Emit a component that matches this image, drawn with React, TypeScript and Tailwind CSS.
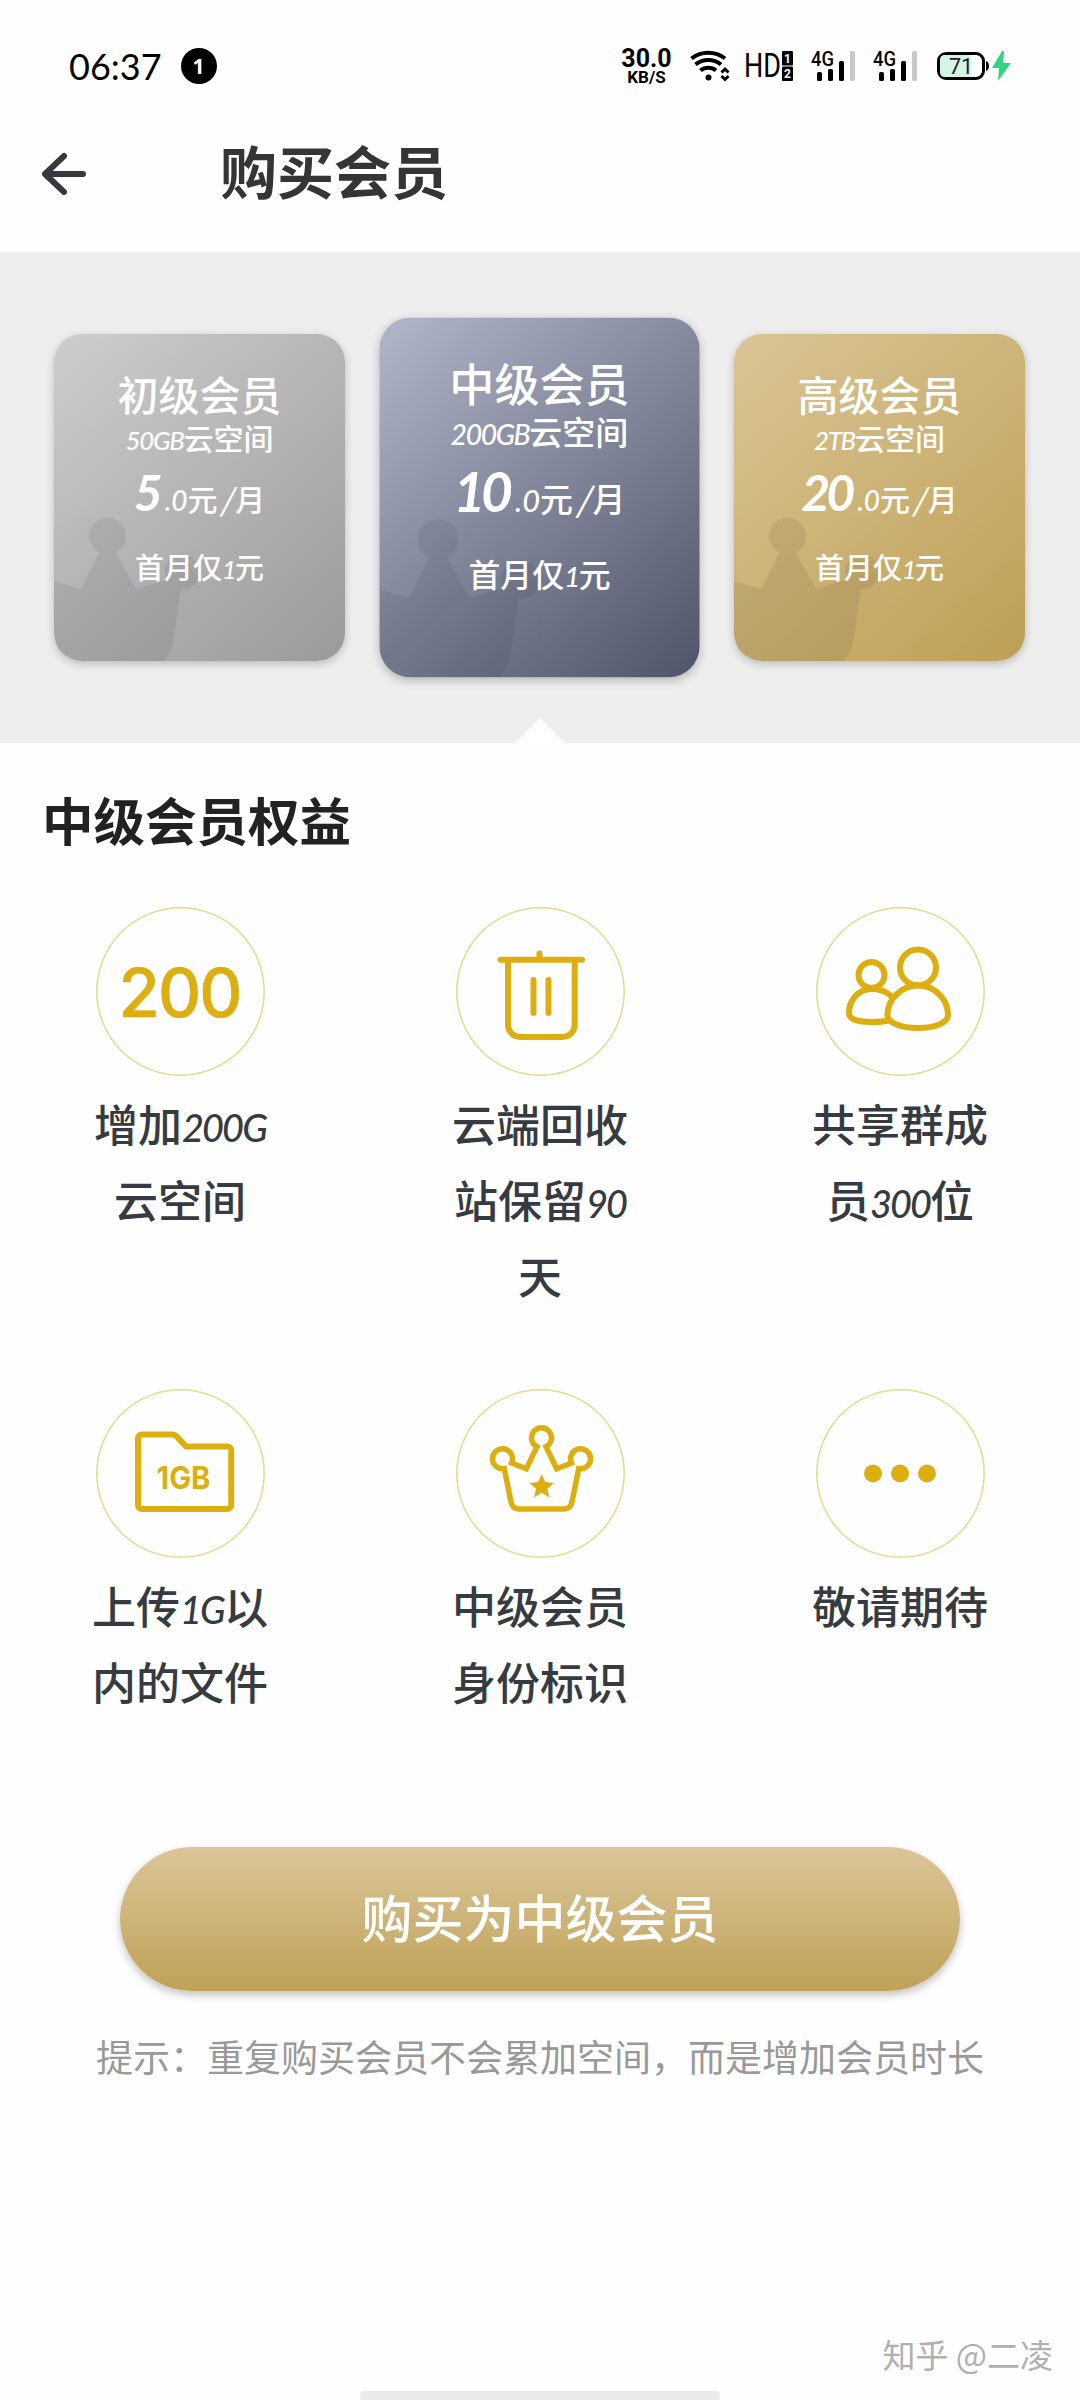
import type { ReactNode } from "react";

type Plan = {
  id: string;
  name: string;
  quota: string;
  price: string;
  gradient: string;
  active?: boolean;
};

const PLANS: Plan[] = [
  {
    id: "basic",
    name: "初级会员",
    quota: "50GB",
    price: "5",
    gradient: "from-[#cdcdcd] to-[#9a9a9a]",
  },
  {
    id: "middle",
    name: "中级会员",
    quota: "200GB",
    price: "10",
    gradient: "from-[#b1b6ca] to-[#4f5469]",
    active: true,
  },
  {
    id: "senior",
    name: "高级会员",
    quota: "2TB",
    price: "20",
    gradient: "from-[#dac597] to-[#bd9f54]",
  },
];

const GOLD = "#dcae10";

// Latin letters and digits run narrower than the Chinese glyphs next to them
function Latin({ children }: { children: ReactNode }) {
  return (
    <span className="font-[Lato,'Noto_Sans_CJK_SC',sans-serif] text-[0.86em] italic leading-none tracking-[-0.05em]">
      {children}
    </span>
  );
}

function Signal() {
  return (
    <svg className="overflow-visible" width="45" height="32" viewBox="0 0 45 32">
      <text
        x="0"
        y="16"
        fontSize="21"
        fontWeight="500"
        fontFamily="Roboto, sans-serif"
        textLength="23"
        lengthAdjust="spacingAndGlyphs"
      >
        4G
      </text>
      <rect x="6" y="22" width="5" height="9" rx="1.5" />
      <rect x="17" y="19" width="5" height="12" rx="1.5" />
      <rect x="28" y="11" width="5" height="20" rx="1.5" />
      <rect x="39" y="1" width="5" height="30" rx="1.5" fill="#c8c8c8" />
    </svg>
  );
}

function StatusBar() {
  return (
    <header className="flex h-[132px] items-center pl-[69px] pr-[66px] text-black">
      <span className="font-[Lato,sans-serif] text-[36px] leading-none">06:37</span>
      <span className="ml-[19px] flex size-9 items-center justify-center rounded-full bg-black font-['Noto_Sans',sans-serif] text-[21px] font-bold leading-none text-white">
        1
      </span>
      <div className="ml-auto flex w-[49px] flex-col items-center font-[Roboto,sans-serif] leading-none">
        <span className="text-[25px] font-bold leading-[21px]">30.0</span>
        <span className="text-[17px] font-bold leading-[16px]">KB/S</span>
      </div>
      <svg className="ml-[19px]" width="40" height="32" viewBox="0 0 40 32" fill="none" stroke="#000" strokeWidth="4">
        <path d="M1.5 8.5a27 27 0 0 1 33.500 0" />
        <path d="M5.500 14.500a20 20 0 0 1 25.500 0" />
        <path d="M10.500 20.500a12 12 0 0 1 15.500 0" />
        <circle cx="18.500" cy="27.500" r="3" fill="#000" stroke="none" />
        <path d="M31.500 22.500l3.500-3.500 3.500 3.500M31.500 26l3.500 3.500 3.500-3.500" strokeWidth="3" />
      </svg>
      <svg className="ml-[14px] overflow-visible" width="50" height="32" viewBox="0 0 50 32">
        <text x="0" y="27" fontSize="33" fontFamily="Roboto, sans-serif" textLength="37" lengthAdjust="spacingAndGlyphs">
          HD
        </text>
        <rect x="38" y="1" width="11" height="14.500" rx="1" />
        <rect x="38" y="16.500" width="11" height="14.500" rx="1" />
        <g fill="#fff" fontSize="12" fontWeight="700" fontFamily="Roboto, sans-serif" textAnchor="middle">
          <text x="43.500" y="12.500">1</text>
          <text x="43.500" y="28">2</text>
        </g>
      </svg>
      <div className="ml-[17px] flex gap-[17px]">
        <Signal />
        <Signal />
      </div>
      <svg className="ml-[18px]" width="78" height="32" viewBox="0 0 78 32">
        <path d="M50 11q3 1 3 5t-3 5z" />
        <rect x="2.500" y="3.500" width="45" height="25" rx="7.500" fill="#fff" stroke="#000" strokeWidth="3" />
        <path d="M9 5h26v22H9q-5 0-5-5V10q0-5 5-5z" fill="#d3f5e6" />
        <text x="25" y="23.500" fontSize="21.500" fontFamily="Roboto, sans-serif" fontWeight="400" textAnchor="middle" fill="#222">
          71
        </text>
        <path d="M66 1L56 18h7l-1 13 13-18h-8l1-12z" fill="#2fd680" />
      </svg>
    </header>
  );
}

function TitleBar() {
  return (
    <div className="flex h-[120px] items-start pl-[41px] pt-[12px]">
      <svg className="mt-[8px]" width="46" height="44" viewBox="0 0 46 44" fill="none" stroke="#37393f" strokeWidth="6" strokeLinecap="round" strokeLinejoin="round">
        <path d="M42 22H4M23 4L4 22l19 18" />
      </svg>
      <h1 className="-mt-[5px] ml-[133px] text-[57px] font-bold leading-[60px] text-[#353535]">
        购买会员
      </h1>
    </div>
  );
}

function CrownWatermark() {
  return (
    <svg
      className="absolute left-0 top-0 opacity-[0.07]"
      width="291"
      height="327"
      viewBox="0 0 291 327"
      fill="#000"
    >
      <circle cx="53.500" cy="202" r="18.500" />
      <circle cx="128" cy="238" r="17.500" />
      <path d="M0 247l27 8 19-38h15l21 38 34-11 11 10-8 54q-1 10-10 19H0z" />
    </svg>
  );
}

function PlanCard({ plan }: { plan: Plan }) {
  return (
    <button
      type="button"
      className={`relative flex h-[327px] w-[291px] flex-col items-center overflow-hidden rounded-[28px] bg-linear-[138deg] pt-[35px] text-white shadow-[0_3px_9px_rgba(0,0,0,0.22)] ${plan.gradient} ${
        plan.active ? "scale-110" : ""
      }`}
    >
      <CrownWatermark />
      <span className="relative text-[41px] font-medium leading-[48px]">{plan.name}</span>
      <span className="relative mt-px text-[30px] font-medium leading-[38px]">
        <Latin>{plan.quota}</Latin>云空间
      </span>
      <span className="relative mt-[11px] flex h-[50px] items-baseline text-[30px] font-medium leading-[50px]">
        <span className="font-[Lato,sans-serif] text-[50px] font-bold italic tracking-[-0.08em]">
          {plan.price}
        </span>
        <span className="ml-[6px] font-[Lato,sans-serif] text-[28px] italic">.0</span>
        <span>元</span>
        <span className="mx-[3px] italic">/</span>
        <span>月</span>
      </span>
      <span className="relative mt-[30px] text-[29px] font-medium leading-[38px]">
        首月仅<Latin>1</Latin>元
      </span>
    </button>
  );
}

function PlanPicker() {
  return (
    <section className="relative flex h-[491px] justify-center gap-[49px] bg-[#eeeeee] pr-px pt-[82px]">
      {PLANS.map((p) => (
        <PlanCard key={p.id} plan={p} />
      ))}
      <svg className="absolute bottom-0 left-[515px]" width="50" height="25" viewBox="0 0 50 25" fill="#fff">
        <path d="M25 0l25 25H0z" />
      </svg>
    </section>
  );
}

function IconCircle({ children }: { children: ReactNode }) {
  return (
    <svg
      width="169"
      height="169"
      viewBox="0 0 169 169"
      fill="none"
      stroke={GOLD}
      strokeWidth="6"
      strokeLinecap="round"
      strokeLinejoin="round"
    >
      <circle cx="84.500" cy="84.500" r="83.700" stroke="#e4d98c" strokeWidth="1.500" />
      {children}
    </svg>
  );
}

type Benefit = { id: string; icon: ReactNode; lines: ReactNode[] };

const BENEFITS: Benefit[] = [
  {
    id: "space",
    icon: (
      <text x="84.500" y="110" fontSize="67" fontWeight="500" fontFamily="Inter, sans-serif" textAnchor="middle" textLength="124" fill={GOLD} stroke={GOLD} strokeWidth="0.500">
        200
      </text>
    ),
    lines: [<>增加<Latin>200G</Latin></>, "云空间"],
  },
  {
    id: "trash",
    icon: (
      <>
        <path d="M44.500 52.700h81.500M83.500 46.500v6M77.500 73v33M92.500 73v33" />
        <path d="M52 53v65a12 12 0 0 0 12 12h42.700a12 12 0 0 0 12-12V53" />
      </>
    ),
    lines: ["云端回收", <>站保留<Latin>90</Latin></>, "天"],
  },
  {
    id: "group",
    icon: (
      <>
        <circle cx="55.500" cy="68" r="13" />
        <circle cx="102" cy="60.500" r="18" />
        <path d="M74.500 88.500C69.500 84 62.500 82 55.500 82c-13 0-22.500 11-22.500 24 0 7 11.500 9 22.500 9 7 0 12-.4 17-1.500" />
        <path d="M102 78.500C84.500 78.500 71.500 93 71.500 108c0 8 14 13 30.500 13s30-5 30-13c0-15-12.500-29.500-30-29.500z" />
      </>
    ),
    lines: ["共享群成", <>员<Latin>300</Latin>位</>],
  },
  {
    id: "file",
    icon: (
      <>
        <path d="M46 45.500H76.500q2.500 0 4 1.700l9.500 10.300h41.200a4 4 0 0 1 4 4V116a4 4 0 0 1-4 4H46a4 4 0 0 1-4-4V49.500a4 4 0 0 1 4-4z" />
        <text x="60.500" y="99.500" fontSize="31.500" fontWeight="700" fontFamily="Inter, sans-serif" textLength="54" lengthAdjust="spacingAndGlyphs" fill={GOLD} stroke="none">
          1GB
        </text>
      </>
    ),
    lines: [<>上传<Latin>1G</Latin>以</>, "内的文件"],
  },
  {
    id: "badge",
    icon: (
      <>
        <path
          strokeWidth="5.500"
          strokeLinejoin="miter"
          d="M48.300 79.600A10 10 0 1 1 55.500 74l14.800 5.800L81 57.800a10 10 0 1 1 9 0l10.700 22 14.800-5.800a10 10 0 1 1 7.200 5.600L116.200 112q-1.500 8-8 8H62.800q-6.500 0-8-8z"
        />
        <path
          fill={GOLD}
          stroke="none"
          d="M85.700 85l3.500 8.100 8.900.8-6.700 5.800 2 8.700-7.700-4.600-7.700 4.600 2-8.700-6.700-5.800 8.900-.8z"
        />
      </>
    ),
    lines: ["中级会员", "身份标识"],
  },
  {
    id: "more",
    icon: (
      <g fill={GOLD} stroke="none">
        <circle cx="57" cy="84.500" r="9" />
        <circle cx="84" cy="84.500" r="9" />
        <circle cx="111" cy="84.500" r="9" />
      </g>
    ),
    lines: ["敬请期待"],
  },
];

function Benefits() {
  return (
    <section className="h-[1104px]">
      <h2 className="pl-[42px] pt-[42px] text-[51.500px] font-bold leading-[68px] text-[#222222]">
        中级会员权益
      </h2>
      <div className="mt-[54px] grid grid-cols-3 gap-y-[76px]">
        {BENEFITS.map((b) => (
          <div key={b.id} className="flex flex-col items-center">
            <IconCircle>{b.icon}</IconCircle>
            <p className="mt-[9px] text-center text-[44px] font-medium leading-[76px] text-[#363b42]">
              {b.lines.map((line, i) => (
                <span key={i} className="block h-[76px]">
                  {line}
                </span>
              ))}
            </p>
          </div>
        ))}
      </div>
    </section>
  );
}

export default function App() {
  return (
    <main className="relative flex h-[2400px] w-[1080px] flex-col overflow-hidden bg-[#fefefe] font-['Noto_Sans_CJK_SC',sans-serif]">
      <StatusBar />
      <TitleBar />
      <PlanPicker />
      <Benefits />
      <button
        type="button"
        className="mx-[120px] flex h-36 shrink-0 items-center justify-center rounded-full bg-linear-to-b from-[#dbc699] to-[#bfa156] pb-[5px] text-[51px] font-medium text-white shadow-[0_4px_8px_rgba(0,0,0,0.24)]"
      >
        购买为中级会员
      </button>
      <p className="mt-[38px] text-center text-[37px] leading-[54px] text-[#999999]">
        提示：重复购买会员不会累加空间，而是增加会员时长
      </p>
      <div className="mt-auto flex justify-end pb-[14px] pr-[27px]">
        <span className="text-[33px] leading-[46px] text-[#b0b0b0] [text-shadow:-1px_-1px_0_#fff]">
          知乎 @二凌
        </span>
      </div>
      <div className="mx-auto h-[9px] w-[360px] shrink-0 rounded-[4px] bg-[#eaeaea]" />
    </main>
  );
}
